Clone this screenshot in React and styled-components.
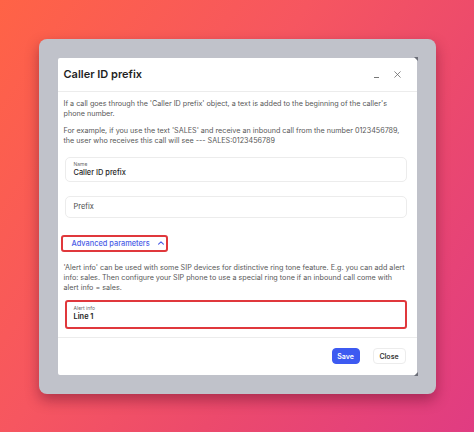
import styled, { createGlobalStyle } from "styled-components";

const Global = createGlobalStyle`
	* { box-sizing: border-box; }
	html, body { margin: 0; padding: 0; }
	body {
		font-family: Inter, "Noto Sans", sans-serif;
		-webkit-font-smoothing: antialiased;
	}
`;

const Backdrop = styled.div`
	width: 474px;
	height: 432px;
	display: flex;
	align-items: center;
	justify-content: center;
	background: linear-gradient(125deg, #ff6346 0%, #f65660 40%, #ec4a6c 65%, #e03c82 100%);
`;

const Frame = styled.div`
	width: 397px;
	height: 355px;
	padding: 19px;
	background-color: #c0c2ca;
	border-radius: 8px;
	box-shadow: 0 6px 14px rgba(90, 10, 40, 0.45);
`;

const Dialog = styled.div`
	width: 359px;
	height: 317px;
	background-color: #fff;
	border-radius: 2px;
	display: flex;
	flex-direction: column;
	position: relative;
`;

const Header = styled.div`
	height: 34px;
	flex-shrink: 0;
	display: flex;
	align-items: center;
	justify-content: space-between;
	padding: 0 16px 0 6px;
	border-bottom: 1px solid #ececec;
`;

const Title = styled.h1`
	margin: 0;
	font-size: 11px;
	font-weight: 600;
	color: #1f1f1f;
`;

const HeaderTools = styled.div`
	display: flex;
	align-items: center;
	gap: 15px;
`;

const Minimize = styled.span`
	width: 5px;
	height: 1px;
	margin-top: 6px;
	background-color: #777;
`;

const Body = styled.div`
	flex: 1;
	padding: 7px 10px 0 6px;
	display: flex;
	flex-direction: column;
`;

const Text = styled.p`
	margin: ${(p) => p.$top || 0}px 0 0 0;
	font-size: 7.2px;
	line-height: 10px;
	color: #585858;
`;

const Field = styled.div`
	margin: ${(p) => p.$top}px 0 0 1px;
	min-height: ${(p) => p.$h}px;
	padding: ${(p) => (p.$alert ? "2px 7px 3px" : "3px 8px")};
	border: ${(p) => (p.$alert ? "2px solid #e0383c" : "1px solid #ececec")};
	border-radius: ${(p) => (p.$alert ? "3px" : "5px")};
	display: flex;
	flex-direction: column;
	justify-content: center;
`;

const Label = styled.span`
	font-size: 5px;
	line-height: 7px;
	color: #6a6a6a;
`;

const Value = styled.span`
	font-size: 7.4px;
	line-height: 10px;
	font-weight: ${(p) => p.$w || 500};
	color: ${(p) => (p.$muted ? "#4a4a4a" : "#1e1e1e")};
`;

const Advanced = styled.button`
	align-self: flex-start;
	margin: 17px 0 0 -3px;
	height: 17px;
	width: 107px;
	padding: 0 0 0 9px;
	display: flex;
	align-items: center;
	gap: 8px;
	background: #fff;
	border: 2px solid #e0383c;
	border-radius: 3px;
	font-family: inherit;
	font-size: 7.4px;
	font-weight: 500;
	color: #4a5de6;
	cursor: pointer;
`;

const Footer = styled.div`
	margin-top: 6px;
	height: 38px;
	border-top: 1px solid #ececec;
	display: flex;
	align-items: center;
	justify-content: flex-end;
	gap: 13px;
	padding-right: 11px;
`;

const Button = styled.button`
	height: 16px;
	padding: 0;
	width: ${(p) => (p.$primary ? "28px" : "33px")};
	border-radius: 4px;
	border: 1px solid ${(p) => (p.$primary ? "#3d5af1" : "#ececec")};
	background-color: ${(p) => (p.$primary ? "#3d5af1" : "#fff")};
	color: ${(p) => (p.$primary ? "#fff" : "#3a3a3a")};
	font-family: inherit;
	font-size: 7px;
	font-weight: 600;
	cursor: pointer;
`;

const Corner = styled.span`
	position: absolute;
	right: -1px;
	${(p) => (p.$top ? "top: -1px;" : "bottom: -1px;")}
	width: 0;
	height: 0;
	border-left: 4px solid transparent;
	border-${(p) => (p.$top ? "top" : "bottom")}: 4px solid #6b6e78;
`;

function App() {
	return (
		<>
			<Global />
			<Backdrop>
				<Frame>
					<Dialog>
						<Corner $top />
						<Corner />
						<Header>
							<Title>Caller ID prefix</Title>
							<HeaderTools>
								<Minimize />
								<svg width="7" height="7" viewBox="0 0 10 10">
									<path d="M1 1 L9 9 M9 1 L1 9" stroke="#666" strokeWidth="1.1" strokeLinecap="round" />
								</svg>
							</HeaderTools>
						</Header>
						<Body>
							<Text>
								If a call goes through the 'Caller ID prefix' object, a text is added to the beginning of the caller's phone number.
							</Text>
							<Text $top={7}>
								For example, if you use the text 'SALES' and receive an inbound call from the number 0123456789, the user who receives this call will see --- SALES:0123456789
							</Text>
							<Field $top={11} $h={24}>
								<Label>Name</Label>
								<Value>Caller ID prefix</Value>
							</Field>
							<Field $top={14} $h={22}>
								<Value $w={400} $muted>Prefix</Value>
							</Field>
							<Advanced>
								Advanced parameters
								<svg width="6" height="4" viewBox="0 0 10 6">
									<path d="M1 5 L5 1 L9 5" fill="none" stroke="#4a5de6" strokeWidth="1.8" strokeLinecap="round" strokeLinejoin="round" />
								</svg>
							</Advanced>
							<Text $top={11}>
								'Alert info' can be used with some SIP devices for distinctive ring tone feature. E.g. you can add alert info: sales. Then configure your SIP phone to use a special ring tone if an inbound call come with alert info = sales.
							</Text>
							<Field $top={7} $h={29} $alert>
								<Label>Alert info</Label>
								<Value $w={600}>Line 1</Value>
							</Field>
						</Body>
						<Footer>
							<Button $primary>Save</Button>
							<Button>Close</Button>
						</Footer>
					</Dialog>
				</Frame>
			</Backdrop>
		</>
	);
}

export default App;
